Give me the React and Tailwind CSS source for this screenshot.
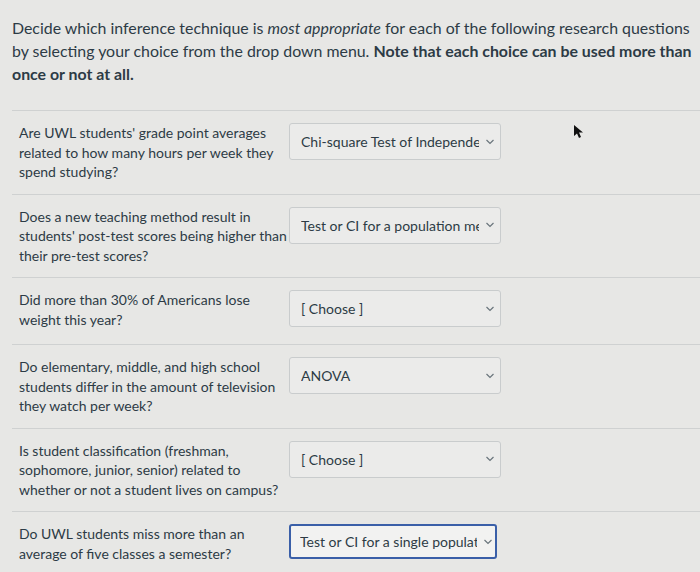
import React from 'react';

const rows = [
  {
    lines: ["Are UWL students' grade point averages", 'related to how many hours per week they', 'spend studying?'],
    value: 'Chi-square Test of Independence',
  },
  {
    lines: ['Does a new teaching method result in', "students' post-test scores being higher than", 'their pre-test scores?'],
    value: 'Test or CI for a population mean difference',
  },
  {
    lines: ['Did more than 30% of Americans lose', 'weight this year?'],
    value: '[ Choose ]',
  },
  {
    lines: ['Do elementary, middle, and high school', 'students differ in the amount of television', 'they watch per week?'],
    value: 'ANOVA',
  },
  {
    lines: ['Is student classification (freshman,', 'sophomore, junior, senior) related to', 'whether or not a student lives on campus?'],
    value: '[ Choose ]',
  },
  {
    lines: ['Do UWL students miss more than an', 'average of five classes a semester?'],
    value: 'Test or CI for a single population mean',
    focused: true,
  },
];

const Chevron = () => (
  <svg width="10" height="10" viewBox="0 0 10 10" className="shrink-0">
    <path d="M1.5 3 L5 6.5 L8.5 3" fill="none" stroke="#6a757c" strokeWidth="1.2" />
  </svg>
);

// fake select: clipped label + chevron
const Select = ({ value, focused }) => (
  <div
    className={
      focused
        ? 'w-[208px] h-[35px] flex items-center pl-[9px] pr-[2px] rounded-[3px] border-2 border-[#3a5fa8] bg-[#f2f2f1]'
        : 'w-[212px] h-[37px] flex items-center pl-[11px] pr-[5px] rounded-[3px] border border-[#c9cccd] bg-[#ebebea]'
    }
  >
    <span className="flex-1 overflow-hidden whitespace-nowrap text-[14px] text-[#2d3b45] mr-[6px]">{value}</span>
    <Chevron />
  </div>
);

export default function App() {
  return (
    <div className="w-[700px] h-[572px] overflow-hidden bg-[#e7e7e5] text-[#2d3b45]" style={{ fontFamily: 'Lato, "Open Sans", sans-serif' }}>
      <div className="relative pl-[12px] pt-[16px]">
        <p className="text-[15.9px] leading-[23px] pb-[25px] whitespace-nowrap">
          Decide which inference technique is <em>most appropriate</em> for each of the following research questions
          <br />
          by selecting your choice from the drop down menu. <b className="font-bold">Note that each choice can be used more than</b>
          <br />
          <b className="font-bold">once or not at all.</b>
        </p>
        <div className="border-t border-[#cfd1d1]">
          {rows.map((row, i) => (
            <div key={i} className="flex items-start min-h-[67px] py-[12px] border-b border-[#cfd1d1]">
              <div className="w-[277px] pl-[7px] text-[14px] leading-[19.5px] whitespace-nowrap">
                {row.lines.map((l, j) => (
                  <div key={j}>{l}</div>
                ))}
              </div>
              <Select value={row.value} focused={row.focused} />
            </div>
          ))}
        </div>
        <svg className="absolute left-[573px] top-[124px]" width="12" height="16" viewBox="0 0 12 16">
          <path d="M1 1 L1 12 L4 9.5 L6 14 L8 13 L6 8.5 L10 8.5 Z" fill="#111" />
        </svg>
      </div>
    </div>
  );
}
